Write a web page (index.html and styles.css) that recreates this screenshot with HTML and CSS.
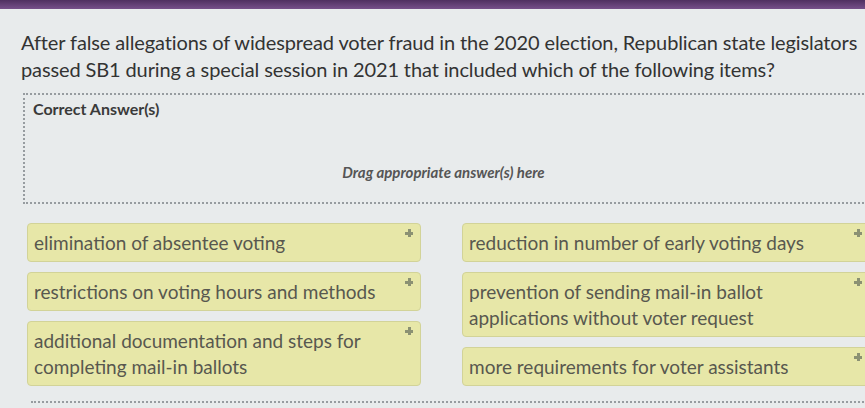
FILE: index.html
```html
<!DOCTYPE html>
<html lang="en">
<head>
    <meta charset="UTF-8">
    <meta name="viewport" content="width=device-width, initial-scale=1.0">
    <title>Drag and Drop Question</title>
    <link rel="stylesheet" href="styles.css">
</head>
<body>

<div class="topbar"></div>

<div class="page">
    <p class="question">After false allegations of widespread voter fraud in the 2020 election, Republican state legislators passed SB1 during a special session in 2021 that included which of the following items?</p>

    <div class="dropzone">
        <div class="dropzone-title">Correct Answer(s)</div>
        <div class="dropzone-hint">Drag appropriate answer(s) here</div>
    </div>

    <div class="choices">
        <div class="choice-col left">
            <div class="choice">elimination of absentee voting<span class="grip"></span></div>
            <div class="choice">restrictions on voting hours and methods<span class="grip"></span></div>
            <div class="choice">additional documentation and steps for completing mail-in ballots<span class="grip"></span></div>
        </div>
        <div class="choice-col right">
            <div class="choice">reduction in number of early voting days<span class="grip"></span></div>
            <div class="choice">prevention of sending mail-in ballot applications without voter request<span class="grip"></span></div>
            <div class="choice">more requirements for voter assistants<span class="grip"></span></div>
        </div>
    </div>

    <div class="next-zone"></div>
</div>

</body>
</html>
```

FILE: styles.css
```css
body {
    margin: 0;
    background-color: #e8ebec;
    font-family: Lato, "Open Sans", sans-serif;
    overflow: hidden;
}

.topbar {
    height: 9px;
    background: linear-gradient(to bottom, #4f2f60, #77508a);
}

.page {
    width: 880px;
}

.question {
    margin: 20px 0 0 21px;
    font-size: 20px;
    line-height: 27px;
    letter-spacing: -0.12px;
    color: #333;
}

.dropzone {
    margin: 10px 0 0 23px;
    border-top: 2px dotted #979ca0;
    border-left: 2px dotted #979ca0;
    border-bottom: 2px dotted #979ca0;
    padding: 5px 0 21px 8px;
}

.dropzone-title {
    font-size: 16px;
    font-weight: bold;
    line-height: 18px;
    color: #3a3a3a;
}

.dropzone-hint {
    margin-top: 45px;
    padding-right: 26px;
    text-align: center;
    font-size: 15px;
    font-weight: bold;
    font-style: italic;
    line-height: 18px;
    color: #555;
}

.choices {
    display: flex;
    gap: 41px;
    margin: 19px 0 0 27px;
}

.choice-col {
    display: flex;
    flex-direction: column;
    gap: 10px;
}

.choice-col.left {
    width: 394px;
}

.choice-col.right {
    width: 408px;
}

.choice {
    position: relative;
    padding: 6px 30px 5px 6px;
    font-size: 19px;
    line-height: 26px;
    color: #58584f;
    background-color: #e7e7a8;
    border: 1px solid #d2d398;
    border-radius: 4px;
}

/* little cross used as the drag handle */
.grip {
    position: absolute;
    top: 5px;
    right: 7px;
    width: 8px;
    height: 8px;
    background:
        linear-gradient(#8b9173, #8b9173) center / 8px 3px no-repeat,
        linear-gradient(#8b9173, #8b9173) center / 3px 8px no-repeat;
}

.next-zone {
    margin: 15px 0 0 31px;
    border-top: 2px dotted #979ca0;
}
```
